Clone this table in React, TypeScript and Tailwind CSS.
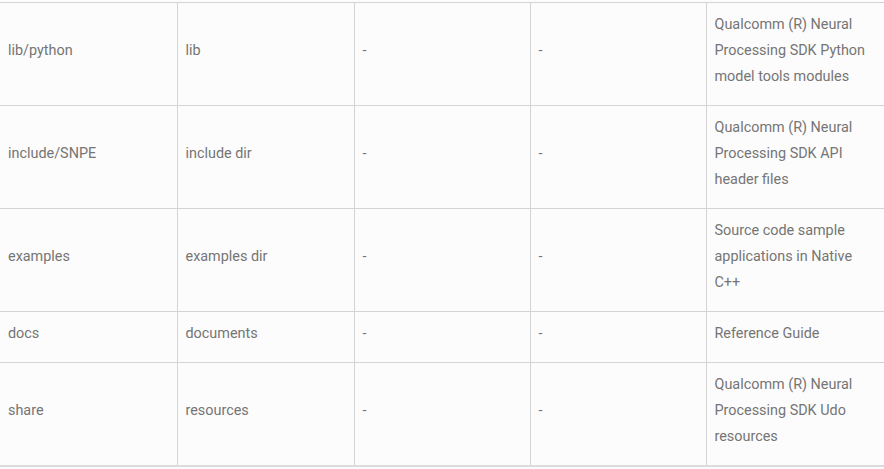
const rows = [
  ["lib/python", "lib", "-", "-", "Qualcomm (R) Neural Processing SDK Python model tools modules"],
  ["include/SNPE", "include dir", "-", "-", "Qualcomm (R) Neural Processing SDK API header files"],
  ["examples", "examples dir", "-", "-", "Source code sample applications in Native C++"],
  ["docs", "documents", "-", "-", "Reference Guide"],
  ["share", "resources", "-", "-", "Qualcomm (R) Neural Processing SDK Udo resources"],
];

export default function App() {
  return (
    <div className="min-h-screen bg-[#fcfcfc] pt-[2px] font-['Roboto',sans-serif] text-[#757575]">
      <table className="w-[884px] table-fixed border-collapse border-b-2 border-b-[#dcdcdc] text-[14.4px] leading-[26px]">
        <colgroup>
          <col className="w-[177px]" />
          <col className="w-[177px]" />
          <col className="w-[176px]" />
          <col className="w-[176px]" />
          <col className="w-[178px]" />
        </colgroup>
        <tbody>
          {rows.map((r) => (
            <tr key={r[0]} className="border-t border-[#d4d4d4]">
              {r.map((c, i) => (
                <td
                  key={i}
                  className={
                    "align-middle pl-2 pr-3 pt-[9px] pb-[15px] border-[#d4d4d4] " +
                    (i > 0 ? "border-l " : "") +
                    (i === 4 ? "border-r" : "")
                  }
                >
                  {c}
                </td>
              ))}
            </tr>
          ))}
        </tbody>
      </table>
    </div>
  );
}
